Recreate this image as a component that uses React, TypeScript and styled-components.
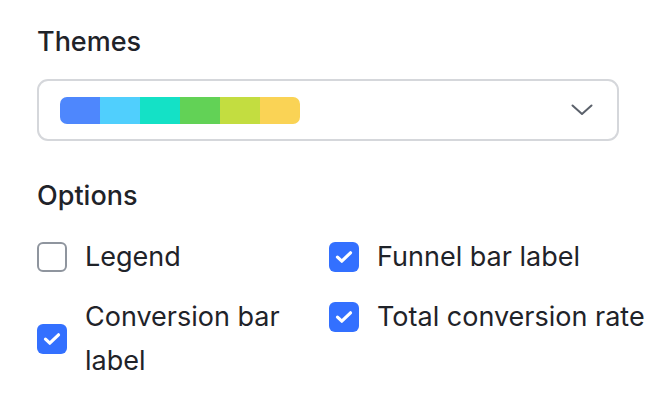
import { useState } from 'react';
import styled, { createGlobalStyle } from 'styled-components';

const GlobalStyle = createGlobalStyle`
  html, body {
    margin: 0;
    padding: 0;
    background: #ffffff;
  }
  body {
    font-family: Inter, 'Noto Sans', sans-serif;
    color: #1f2329;
  }
`;

const themeColors = ['#4e87fd', '#50cffd', '#14e1c6', '#62d256', '#c3dd40', '#fad355'];

type Option = { id: string; label: string; checked: boolean };

const initialOptions: Option[] = [
  { id: 'legend', label: 'Legend', checked: false },
  { id: 'funnel', label: 'Funnel bar label', checked: true },
  { id: 'conversion', label: 'Conversion bar label', checked: true },
  { id: 'total', label: 'Total conversion rate', checked: true },
];

const Styled = {
  Panel: styled.div`
    width: 582px;
    padding: 22px 0 0 37px;
  `,
  Title: styled.div<{ $gap: number }>`
    font-size: 27px;
    line-height: 40px;
    font-weight: 500;
    margin-bottom: ${({ $gap }) => $gap}px;
  `,
  Select: styled.div`
    box-sizing: border-box;
    height: 62px;
    border: 2px solid #d5d7db;
    border-radius: 11px;
    padding: 0 24px 0 21px;
    display: flex;
    align-items: center;
    justify-content: space-between;
    margin-bottom: 35px;
    cursor: pointer;
  `,
  Palette: styled.div`
    display: flex;
    height: 27px;
    border-radius: 7px;
    overflow: hidden;
  `,
  Swatch: styled.span<{ $color: string }>`
    width: 40px;
    background: ${({ $color }) => $color};
  `,
  Grid: styled.div`
    display: grid;
    grid-template-columns: 292px max-content;
    align-items: start;
    row-gap: 16px;
  `,
  Item: styled.label`
    display: flex;
    align-items: center;
    gap: 18px;
    cursor: pointer;
  `,
  Box: styled.span<{ $checked: boolean }>`
    box-sizing: border-box;
    flex: none;
    width: 30px;
    height: 30px;
    border-radius: 6px;
    display: flex;
    align-items: center;
    justify-content: center;
    border: ${({ $checked }) => ($checked ? 'none' : '2px solid #8f959e')};
    background: ${({ $checked }) => ($checked ? '#3370ff' : '#ffffff')};
  `,
  Text: styled.span`
    font-size: 27px;
    line-height: 44px;
  `,
};

const Chevron = () => (
  <svg width="22" height="12" viewBox="0 0 22 12" fill="none">
    <path d="M1.5 1.5 L11 10 L20.5 1.5" stroke="#5b616b" strokeWidth="2" strokeLinecap="round" strokeLinejoin="round" />
  </svg>
);

const Check = () => (
  <svg width="18" height="14" viewBox="0 0 18 14" fill="none">
    <path d="M2.5 7.2 L6.8 11.2 L15.5 2.8" stroke="#ffffff" strokeWidth="3.2" strokeLinecap="round" strokeLinejoin="round" />
  </svg>
);

export default function App() {
  const [options, setOptions] = useState(initialOptions);

  const toggle = (id: string) =>
    setOptions((prev) => prev.map((o) => (o.id === id ? { ...o, checked: !o.checked } : o)));

  return (
    <>
      <GlobalStyle />
      <Styled.Panel>
        <Styled.Title $gap={17}>Themes</Styled.Title>
        <Styled.Select>
          <Styled.Palette>
            {themeColors.map((c) => (
              <Styled.Swatch key={c} $color={c} />
            ))}
          </Styled.Palette>
          <Chevron />
        </Styled.Select>
        <Styled.Title $gap={19}>Options</Styled.Title>
        <Styled.Grid>
          {options.map((o) => (
            <Styled.Item key={o.id} onClick={() => toggle(o.id)}>
              <Styled.Box $checked={o.checked}>{o.checked && <Check />}</Styled.Box>
              <Styled.Text>{o.label}</Styled.Text>
            </Styled.Item>
          ))}
        </Styled.Grid>
      </Styled.Panel>
    </>
  );
}
